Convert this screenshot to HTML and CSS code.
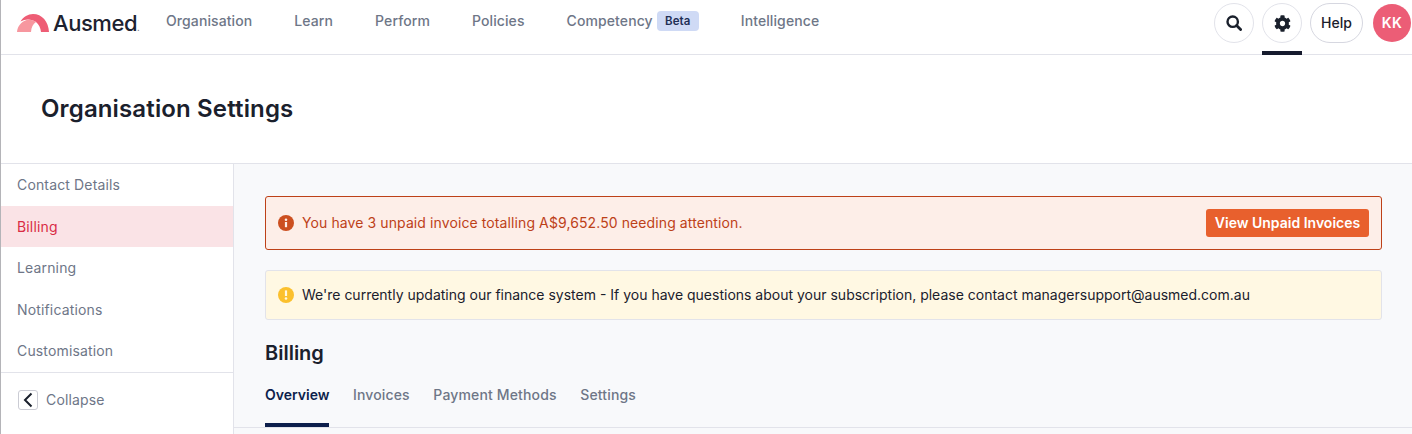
FILE: index.html
```html
<!DOCTYPE html>
<html lang="en">
<head>
<meta charset="utf-8">
<title>Organisation Settings</title>
<link rel="stylesheet" href="styles.css">
</head>
<body>
<div class="page">
  <header class="topbar">
    <a class="logo">
      <svg class="logo-mark" width="32" height="18" viewBox="0 0 32 18">
        <path d="M3.5 7.5 C6.5 2.8 11 0 16 0 C25 0 31.5 7.5 32 18 L24 18 C23.6 13.8 21.8 10.2 19 8 C14.5 4.8 8.5 4.6 3.5 7.5 Z" fill="#ee5d75"/>
        <path d="M0 18 C0.5 12.5 4 7.8 9 6.2 C12.5 5.3 16 6 19 8 C16 10 14.3 13.5 14 18 Z" fill="#f7979f"/>
      </svg>
      <span class="logo-text">Ausmed<span class="logo-dot">.</span></span>
    </a>
    <nav class="mainnav">
      <a>Organisation</a>
      <a>Learn</a>
      <a>Perform</a>
      <a>Policies</a>
      <a>Competency <span class="beta">Beta</span></a>
      <a>Intelligence</a>
    </nav>
    <div class="actions">
      <button class="round"><svg width="16" height="16" viewBox="0 0 16 16"><circle cx="6.7" cy="6.7" r="5.2" fill="none" stroke="#1a202c" stroke-width="2.4"/><path d="M10.6 10.6 L14.6 14.6" stroke="#1a202c" stroke-width="2.8" stroke-linecap="round"/></svg></button>
      <button class="round current"><svg width="17" height="17" viewBox="0 0 512 512"><path fill="#1a202c" d="M487.4 315.7l-42.6-24.6c4.3-23.2 4.3-47 0-70.2l42.6-24.6c4.9-2.8 7.1-8.6 5.5-14-11.1-35.6-30-67.8-54.7-94.6-3.8-4.1-10-5.1-14.8-2.3L380.8 110c-17.9-15.4-38.5-27.3-60.8-35.1V25.8c0-5.6-3.9-10.5-9.4-11.7-36.7-8.2-74.3-7.8-109.2 0-5.5 1.2-9.4 6.1-9.4 11.7V75c-22.2 7.9-42.8 19.8-60.8 35.1L88.7 85.5c-4.9-2.8-11-1.9-14.8 2.3-24.7 26.7-43.6 58.9-54.7 94.6-1.7 5.4.6 11.2 5.5 14L67.3 221c-4.3 23.2-4.3 47 0 70.2l-42.6 24.6c-4.9 2.8-7.1 8.6-5.5 14 11.1 35.6 30 67.8 54.7 94.6 3.8 4.1 10 5.1 14.8 2.3l42.6-24.6c17.9 15.4 38.5 27.3 60.8 35.1v49.2c0 5.6 3.9 10.5 9.4 11.7 36.7 8.2 74.3 7.8 109.2 0 5.5-1.2 9.4-6.1 9.4-11.7v-49.2c22.2-7.9 42.8-19.8 60.8-35.1l42.6 24.6c4.9 2.8 11 1.9 14.8-2.3 24.7-26.7 43.6-58.9 54.7-94.6 1.5-5.5-.7-11.3-5.6-14.1zM256 336c-44.1 0-80-35.9-80-80s35.9-80 80-80 80 35.9 80 80-35.9 80-80 80z"/></svg></button>
      <button class="help">Help</button>
      <span class="avatar">KK</span>
    </div>
  </header>

  <section class="titleband"><h1>Organisation Settings</h1></section>

  <div class="body">
    <aside class="sidebar">
      <ul class="sidelist">
        <li>Contact Details</li>
        <li class="active">Billing</li>
        <li>Learning</li>
        <li>Notifications</li>
        <li>Customisation</li>
      </ul>
      <div class="collapse">
        <span class="collapse-box"><svg width="10" height="16" viewBox="0 0 10 16"><path d="M8.5 1.5 L2 8 L8.5 14.5" fill="none" stroke="#1a202c" stroke-width="2"/></svg></span>
        <span class="collapse-label">Collapse</span>
      </div>
    </aside>
    <main class="content">
      <div class="alert danger">
        <svg width="16" height="16" viewBox="0 0 16 16"><circle cx="8" cy="8" r="8" fill="#cc4f20"/><rect x="6.9" y="7" width="2.2" height="5.2" fill="#fdeee8"/><circle cx="8" cy="4.7" r="1.3" fill="#fdeee8"/></svg>
        <span class="alert-text">You have 3 unpaid invoice totalling A$9,652.50 needing attention.</span>
        <button class="alert-btn">View Unpaid Invoices</button>
      </div>
      <div class="alert notice">
        <svg width="16" height="16" viewBox="0 0 16 16"><circle cx="8" cy="8" r="8" fill="#fbc02d"/><rect x="6.9" y="3.4" width="2.2" height="5.6" fill="#fff8e3"/><circle cx="8" cy="11.5" r="1.3" fill="#fff8e3"/></svg>
        <span class="alert-text">We're currently updating our finance system - If you have questions about your subscription, please contact managersupport@ausmed.com.au</span>
      </div>
      <h2>Billing</h2>
      <nav class="tabs">
        <a class="on">Overview</a>
        <a>Invoices</a>
        <a>Payment Methods</a>
        <a>Settings</a>
      </nav>
    </main>
  </div>
</div>
</body>
</html>
```
FILE: styles.css
```css
* { box-sizing: border-box; }
html, body { margin: 0; height: 100%; overflow: hidden; }
body { font-family: Inter, "Liberation Sans", sans-serif; background: #fff; color: #1a202c; }
.page { height: 434px; border-left: 1px solid #b4b4b8; display: flex; flex-direction: column; }

.topbar { height: 55px; flex: none; border-bottom: 1px solid #e2e3ea; display: flex; align-items: flex-start; padding: 0 1px 0 16px; }
.logo { display: flex; align-items: flex-end; width: 149px; height: 32px; flex: none; }
.logo-mark { flex: none; margin-right: 4px; }
.logo-text { font-family: Inter, sans-serif; font-size: 22px; font-weight: 500; line-height: 24px; height: 21px; color: #1d2230; letter-spacing: -0.45px; }
.logo-dot { font-size: 9px; color: #6b7280; }
.mainnav { display: flex; gap: 42px; height: 40px; align-items: center; font-size: 14px; font-weight: 500; color: #6e7687; letter-spacing: 0.1px; }
.mainnav a { display: flex; align-items: center; gap: 4px; }
.beta { background: #cfdaf5; color: #1f2f55; font-size: 11.5px; font-weight: 600; width: 42px; text-align: center; height: 20px; line-height: 20px; border-radius: 4px; margin-top: 2px; }
.actions { margin-left: auto; display: flex; gap: 8px; align-items: flex-start; padding-top: 3px; position: relative; }
.round { width: 40px; height: 40px; border-radius: 50%; border: 1px solid #e2e3ea; background: #fff; padding: 0; display: flex; align-items: center; justify-content: center; }
.current { position: relative; }
.current::after { content: ""; position: absolute; left: -1px; right: -1px; top: 47px; height: 4px; background: #161b2e; }
.help { width: 53px; height: 40px; border-radius: 20px; border: 1px solid #d6d7e0; background: #fff; font: 500 14px Inter, sans-serif; color: #1a202c; padding: 0 0 2px; }
.avatar { width: 38px; height: 38px; margin-top: 1px; margin-left: 2px; padding-bottom: 2px; border-radius: 50%; background: #ec5d76; color: #fff; font-size: 14px; font-weight: 600; display: flex; align-items: center; justify-content: center; letter-spacing: 0.5px; }

.titleband { height: 109px; flex: none; border-bottom: 1px solid #e2e3ea; display: flex; align-items: center; padding-left: 40px; }
h1 { margin: 0 0 1px; font-size: 24px; font-weight: 600; line-height: 32px; color: #1a202c; letter-spacing: 0.14px; }

.body { flex: 1; display: flex; min-height: 0; }
.sidebar { width: 233px; flex: none; border-right: 1px solid #e2e3ea; background: #fff; font-size: 14px; color: #6e7687; letter-spacing: 0.15px; }
.sidelist { list-style: none; margin: 0; padding: 0; border-bottom: 1px solid #e2e3ea; height: 209px; display: grid; grid-auto-rows: 41.5px; }
.sidelist li { display: flex; align-items: center; padding-left: 16px; }
.sidelist .active { background: #fae3e6; color: #d92c45; }
.collapse { display: flex; align-items: center; gap: 8px; padding: 17px 0 0 17px; }
.collapse-box { width: 20px; height: 20px; border: 1px solid #cbccd4; border-radius: 3px; display: flex; align-items: center; justify-content: center; }
.collapse-label { padding-bottom: 2px; }

.content { flex: 1; background: #f8f9fb; padding: 32px 30px 0 31px; min-width: 0; }
.alert { display: flex; align-items: center; gap: 8px; padding: 0 12px; border-radius: 3px; font-size: 14px; }
.alert svg { flex: none; }
.alert-text { flex: 1; padding-bottom: 2px; }
.danger { height: 54px; background: #fdeee8; border: 1px solid #bd4118; color: #bd4118; letter-spacing: 0.1px; }
.notice { height: 50px; margin-top: 20px; background: #fff8e3; border: 1px solid #e2e3ea; color: #1a202c; }
.alert-btn { background: #e8602d; border: none; border-radius: 3px; color: #fff; font: 600 14px Inter, sans-serif; height: 28px; width: 163px; padding: 0 0 2px; }
h2 { margin: 19px 0 0; font-size: 20px; font-weight: 600; line-height: 28px; color: #1a202c; }
.tabs { display: flex; gap: 23.5px; height: 61px; margin: 0 -30px 0 -31px; padding: 0 0 0 31px; border-bottom: 1px solid #e2e3ea; font-size: 14px; font-weight: 500; color: #6e7687; letter-spacing: 0.15px; }
.tabs a { height: 60px; line-height: 42px; padding-top: 7px; }
.tabs .on { color: #0d1f4c; font-weight: 600; border-bottom: 4px solid #0d1f4c; letter-spacing: 0; }
```
